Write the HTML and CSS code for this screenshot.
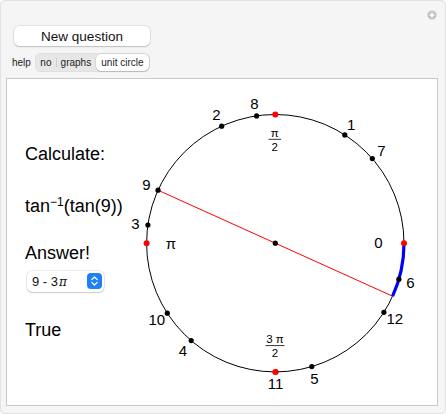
FILE: index.html
```html
<!DOCTYPE html>
<html lang="en">
<head>
    <meta charset="UTF-8">
    <title>Inverse tangent - unit circle</title>
    <link rel="stylesheet" href="styles.css">
</head>
<body>
    <div class="frame">
        <span class="plus-icon">
            <svg width="10" height="10" viewBox="0 0 10 10">
                <circle cx="5" cy="5" r="4.6" fill="#c4c4c4"/>
                <path d="M5 2.6V7.4M2.6 5H7.4" stroke="#fff" stroke-width="1.4"/>
            </svg>
        </span>

        <button class="new-btn">New question</button>

        <div class="help-row">
            <span class="help-label">help</span>
            <div class="segmented">
                <span class="seg">no</span>
                <span class="seg sep">graphs</span>
                <span class="seg active">unit circle</span>
            </div>
        </div>

        <div class="panel">
            <div class="question">
                <div class="line calc">Calculate:</div>
                <div class="line expr">tan<span class="sup">&minus;1</span>(tan(9))</div>
                <div class="line answer">Answer!</div>
                <div class="answer-select">
                    <span class="choice">9 - 3<i>&pi;</i></span>
                    <span class="stepper">
                        <svg width="9" height="12" viewBox="0 0 9 12">
                            <path d="M1.8 4.6L4.5 2L7.2 4.6M1.8 7.4L4.5 10L7.2 7.4" fill="none" stroke="#fff" stroke-width="1.3" stroke-linecap="round" stroke-linejoin="round"/>
                        </svg>
                    </span>
                </div>
                <div class="line verdict">True</div>
            </div>

            <svg class="circle-plot" width="316" height="326" viewBox="121 79 316 326">
                <circle cx="275.3" cy="243.2" r="128.7" fill="none" stroke="#000" stroke-width="1"/>
                <!-- chord through the center, from 9 to the answer -->
                <line x1="158.0" y1="190.2" x2="392.6" y2="296.2" stroke="#ff0000" stroke-width="1"/>
                <path d="M404 243.2 A128.7 128.7 0 0 1 392.6 296.2" fill="none" stroke="#0000ff" stroke-width="3.2"/>

                <g fill="#000">
                    <circle cx="275.3" cy="243.2" r="2.6"/>
                    <circle cx="344.8" cy="134.9" r="2.6"/>
                    <circle cx="221.7" cy="126.2" r="2.6"/>
                    <circle cx="147.9" cy="225.0" r="2.6"/>
                    <circle cx="191.2" cy="340.6" r="2.6"/>
                    <circle cx="311.8" cy="366.6" r="2.6"/>
                    <circle cx="398.9" cy="279.2" r="2.6"/>
                    <circle cx="372.3" cy="158.6" r="2.6"/>
                    <circle cx="256.6" cy="115.9" r="2.6"/>
                    <circle cx="158.0" cy="190.2" r="2.6"/>
                    <circle cx="167.3" cy="313.2" r="2.6"/>
                    <circle cx="275.9" cy="371.9" r="2.6"/>
                    <circle cx="383.9" cy="312.3" r="2.6"/>
                </g>

                <!-- quarter marks sit on top -->
                <g fill="#ff0000">
                    <circle cx="404" cy="243.2" r="3"/>
                    <circle cx="275.3" cy="114.5" r="3"/>
                    <circle cx="146.6" cy="243.2" r="3"/>
                    <circle cx="275.3" cy="371.9" r="3"/>
                </g>

                <g class="num">
                    <text x="351.2" y="124.5">1</text>
                    <text x="216.3" y="114.5">2</text>
                    <text x="135.5" y="223.3">3</text>
                    <text x="182.8" y="350.0">4</text>
                    <text x="314.5" y="378.4">5</text>
                    <text x="410.5" y="282.4">6</text>
                    <text x="381.3" y="150.4">7</text>
                    <text x="254.5" y="103.2">8</text>
                    <text x="146.4" y="184.8">9</text>
                    <text x="156.8" y="319.6">10</text>
                    <text x="275.5" y="383.8">11</text>
                    <text x="394.8" y="318.0">12</text>
                    <text x="378.5" y="242.8">0</text>
                    <text x="171" y="243.2">&pi;</text>
                </g>

                <g class="frac">
                    <text x="274.8" y="132.5">&pi;</text>
                    <line x1="268.5" y1="139.3" x2="281" y2="139.3" stroke="#000" stroke-width="0.8"/>
                    <text x="274.8" y="146.6">2</text>
                    <text x="275" y="338.6">3 &pi;</text>
                    <line x1="265.5" y1="345.6" x2="284.5" y2="345.6" stroke="#000" stroke-width="0.8"/>
                    <text x="275" y="353.3">2</text>
                </g>
            </svg>
        </div>
    </div>
</body>
</html>
```

FILE: styles.css
```css
body { margin: 0; font-family: "Liberation Sans", Arial, sans-serif; background: #fff; }
.frame { position: relative; width: 446px; height: 414px; box-sizing: border-box; border: 1px solid #e2e2e2; border-radius: 4px; background: #f5f5f5; padding: 25px 7px 7px 5px; }
.plus-icon { position: absolute; top: 8.5px; right: 8px; width: 10px; height: 10px; }
.plus-icon svg { display: block; }

.new-btn { display: block; margin-left: 8px; width: 136px; height: 20px; padding: 0; border: none; border-radius: 5px; background: #fff; font-family: "Liberation Sans", Arial, sans-serif; font-size: 13.5px; color: #111; box-shadow: 0 0 0 0.5px rgba(0,0,0,0.14), 0 1px 1.5px rgba(0,0,0,0.16); }

.help-row { display: flex; align-items: center; gap: 4px; margin: 7px 0 0 6px; height: 19px; }
.help-label { font-size: 10px; color: #222; }
.segmented { display: flex; align-items: stretch; height: 19px; width: 115px; box-sizing: border-box; padding: 1px; border-radius: 6px; background: #e7e7e7; box-shadow: inset 0 0 0 0.5px rgba(0,0,0,0.06); }
.seg { display: flex; align-items: center; justify-content: center; font-size: 10px; color: #222; position: relative; }
.seg:nth-child(1) { width: 20px; }
.seg:nth-child(2) { width: 40px; }
.seg.sep::before { content: ""; position: absolute; left: 0; top: 4px; bottom: 4px; width: 1px; background: #cfcfcf; }
.seg.active { flex: 1; background: #fff; border-radius: 5px; box-shadow: 0 0 0 0.5px rgba(0,0,0,0.12), 0 1px 1px rgba(0,0,0,0.12); }

.panel { display: flex; margin-top: 6px; width: 432px; height: 328px; box-sizing: border-box; border: 1px solid #c8c8c8; background: #fff; }
.question { width: 114px; box-sizing: border-box; padding: 65px 0 0 18px; }
.line { font-size: 18px; line-height: 20px; color: #000; white-space: nowrap; }
.expr { margin-top: 31.5px; }
.sup { font-size: 12px; line-height: 0; vertical-align: 6px; }
.answer { margin-top: 27px; }
.verdict { margin-top: 28.5px; }

.answer-select { display: flex; align-items: center; justify-content: space-between; margin: 8px 0 0 2px; width: 77px; height: 21px; box-sizing: border-box; padding: 0 2px 0 5px; border-radius: 5px; background: #fff; box-shadow: 0 0 0 0.5px rgba(0,0,0,0.16), 0 1px 1.5px rgba(0,0,0,0.14); }
.choice { font-size: 13px; color: #111; white-space: nowrap; }
.choice i { font-family: "DejaVu Serif", serif; font-size: 12px; margin-left: 1px; }
.stepper { display: flex; align-items: center; justify-content: center; width: 15px; height: 16px; border-radius: 4px; background: #1f80f6; }

.circle-plot { display: block; }
.num text { font-family: "Liberation Sans", Arial, sans-serif; font-size: 15px; text-anchor: middle; dominant-baseline: central; fill: #000; }
.frac text { font-family: "Liberation Sans", Arial, sans-serif; font-size: 11.5px; text-anchor: middle; dominant-baseline: central; fill: #000; }
```
